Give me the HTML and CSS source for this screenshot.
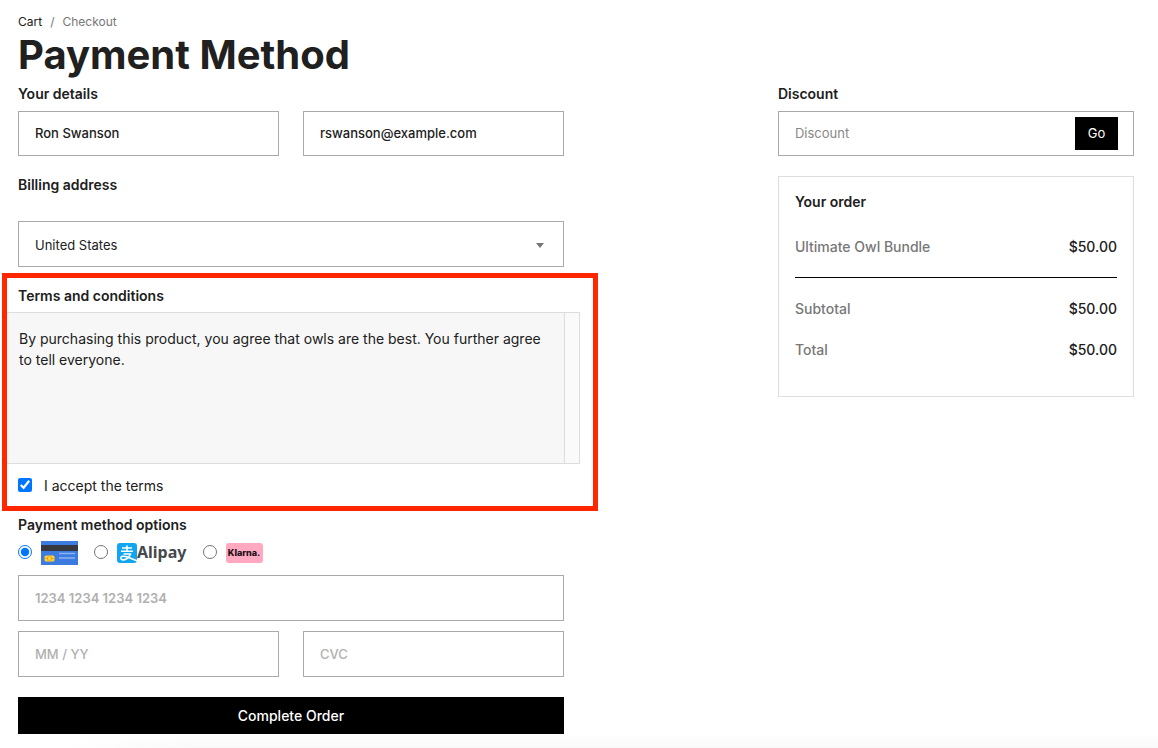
FILE: index.html
```html
<!DOCTYPE html>
<html lang="en">
<head>
    <meta charset="UTF-8">
    <meta name="viewport" content="width=device-width, initial-scale=1">
    <title>Payment Method</title>
    <link rel="stylesheet" href="styles.css">
</head>
<body>
    <header>
        <nav class="breadcrumb" aria-label="Breadcrumb">
            <a href="#">Cart</a>
            <span>/</span>
            <span>Checkout</span>
        </nav>
        <h1>Payment Method</h1>
    </header>

    <main class="checkout">
        <form class="details" id="payment">
            <h2>Your details</h2>
            <div class="row">
                <input class="field" type="text" aria-label="Name" value="Ron Swanson">
                <input class="field" type="email" aria-label="Email" value="rswanson@example.com">
            </div>

            <h2 class="billing-title"><label for="country">Billing address</label></h2>
            <div class="select">
                <select class="field" id="country">
                    <option>United States</option>
                </select>
                <svg class="arrow" width="8" height="5" viewBox="0 0 8 5" aria-hidden="true"><path d="M0 0h8L4 5z" fill="#777"/></svg>
            </div>

            <section class="terms">
                <h2>Terms and conditions</h2>
                <div class="terms-box">
                    <p>By purchasing this product, you agree that owls are the best. You further agree to tell everyone.</p>
                    <div class="terms-scroll"></div>
                </div>
                <div class="accept">
                    <input type="checkbox" id="accept" checked>
                    <label for="accept">I accept the terms</label>
                </div>
            </section>

            <h2>Payment method options</h2>
            <div class="methods">
                <input type="radio" name="method" id="card" checked>
                <label for="card" aria-label="Card">
                    <svg width="37" height="24" viewBox="0 0 37 24">
                        <rect width="37" height="24" fill="#3c7be0"/>
                        <rect y="4" width="37" height="6" fill="#35383f"/>
                        <rect x="3.500" y="14.500" width="10" height="6" rx="1.500" fill="#ffd23c"/>
                        <path d="M3.500 17.500h3M10.500 17.500h3M7.500 14.500q-2 3 0 6M9.500 14.500q2 3 0 6" fill="none" stroke="#e0a020" stroke-width="1"/>
                        <path d="M18 12.500h16M18 17h16" stroke="#8cb2f2" stroke-width="1.500"/>
                    </svg>
                </label>
                <input type="radio" name="method" id="alipay">
                <label for="alipay" aria-label="Alipay">
                    <svg width="70" height="24" viewBox="0 0 70 24">
                        <rect y="2" width="20" height="20" rx="3" fill="#12a5f0"/>
                        <path d="M5 7h10M10 4.500v5.500M4 10.200h12M6.500 13h7c-.8 2.400-2.200 4-4.200 5-2.200 1.200-5.300 1.300-5.500-.8-.2-2.300 3.300-2.400 6-1.400 3.200 1.300 6.200 2.700 10.200 4" fill="none" stroke="#fff" stroke-width="1.600"/>
                        <text x="20" y="17" class="alipay-name">Alipay</text>
                    </svg>
                </label>
                <input type="radio" name="method" id="klarna">
                <label for="klarna" aria-label="Klarna">
                    <svg width="37" height="20" viewBox="0 0 37 20">
                        <rect width="37" height="20" rx="3" fill="#ffa8c0"/>
                        <text x="18" y="13" text-anchor="middle" class="klarna-name">Klarna.</text>
                    </svg>
                </label>
            </div>

            <div class="card-fields">
                <input class="field card-number" type="text" aria-label="Card number" placeholder="1234 1234 1234 1234">
                <div class="row">
                    <input class="field" type="text" aria-label="Expiry date" placeholder="MM / YY">
                    <input class="field" type="text" aria-label="CVC" placeholder="CVC">
                </div>
            </div>

            <button class="submit" type="submit">Complete Order</button>
        </form>

        <aside>
            <h2><label for="discount">Discount</label></h2>
            <div class="discount">
                <input type="text" id="discount" placeholder="Discount">
                <button type="button">Go</button>
            </div>

            <section class="order">
                <h2>Your order</h2>
                <table>
                    <tbody class="items">
                        <tr><th scope="row">Ultimate Owl Bundle</th><td>$50.00</td></tr>
                    </tbody>
                    <tbody class="totals">
                        <tr><th scope="row">Subtotal</th><td>$50.00</td></tr>
                        <tr><th scope="row">Total</th><td>$50.00</td></tr>
                    </tbody>
                </table>
            </section>
        </aside>
    </main>
    <footer></footer>
</body>
</html>
```
FILE: styles.css
```css
* {
    box-sizing: border-box;
}

body {
    margin: 0;
    background: #fff;
    color: #202020;
    font-family: Inter, "Liberation Sans", sans-serif;
    font-size: 14px;
    line-height: 20px;
}

header {
    padding: 12px 18px 0;
}

.breadcrumb {
    display: flex;
    gap: 8px;
    font-size: 12px;
    color: #777;
}

.breadcrumb a {
    color: #202020;
    text-decoration: none;
}

h1 {
    margin: 0;
    font-size: 40px;
    line-height: 46px;
    font-weight: 700;
}

h2 {
    margin: 0;
    font-size: 14px;
    line-height: 20px;
    font-weight: 600;
}

input,
select,
button {
    font: inherit;
    color: inherit;
}

.checkout {
    display: grid;
    grid-template-columns: 23fr 15fr;
    gap: 214px;
    align-items: start;
    padding: 6px 24px 0 18px;
}

.row {
    display: grid;
    grid-template-columns: 1fr 1fr;
    gap: 24px;
}

.field {
    width: 100%;
    height: 46px;
    padding: 0 16px;
    border: 1px solid #aaa;
    border-radius: 0;
    background: #fff;
    font-size: 13px;
    appearance: none;
}

.details > .row {
    margin-top: 7px;
}

.details > .row .field {
    height: 45px;
    padding-bottom: 2px;
    font-weight: 500;
}

.billing-title {
    margin: 19px 0 26px;
}

.select {
    display: grid;
    align-items: center;
}

.select .field,
.arrow {
    grid-area: 1 / 1;
}

.select .field {
    padding-top: 2px;
}

.arrow {
    justify-self: end;
    margin: 2px 20px 0 0;
    pointer-events: none;
}

/* highlighted block, wider than the form column */
.terms {
    margin: 6px -34px 4px -16px;
    padding: 8px 13px 10px 0;
    border: 5px solid #ff2600;
}

.terms h2,
.accept {
    padding-left: 11px;
}

.terms-box {
    display: flex;
    height: 152px;
    margin-top: 6px;
    border: 1px solid #ddd;
    border-left: 0;
    background: #f7f7f7;
}

.terms-box p {
    flex: 1;
    margin: 0;
    padding: 15px 20px 0 12px;
    line-height: 21px;
}

.terms-scroll {
    width: 15px;
    border-left: 1px solid #ddd;
    background: #fafafa;
}

.accept {
    display: flex;
    align-items: center;
    gap: 12px;
    margin-top: 12px;
}

.accept input,
.methods input {
    width: 14px;
    height: 14px;
    margin: 0 0 3px;
    accent-color: #0075ff;
}

.methods {
    display: flex;
    align-items: center;
    height: 24px;
    margin-top: 6px;
}

.methods label {
    display: flex;
    margin: 0 16px 0 9px;
}

.alipay-name {
    font: 700 16px "Noto Sans", sans-serif;
    fill: #46484b;
}

.klarna-name {
    font: 800 9px Inter, sans-serif;
    fill: #201018;
}

.card-fields {
    display: grid;
    gap: 10px;
    margin-top: 10px;
}

.card-fields .field {
    font-weight: 500;
}

.card-fields .card-number {
    font-weight: 600;
}

.field::placeholder {
    color: #b0b0b0;
}

.submit {
    width: 100%;
    height: 37px;
    margin-top: 20px;
    border: 0;
    background: #000;
    color: #fff;
    font-weight: 500;
}

.discount {
    display: flex;
    align-items: center;
    height: 45px;
    margin-top: 7px;
    padding: 0 15px 0 16px;
    border: 1px solid #aaa;
}

.discount input {
    flex: 1;
    min-width: 0;
    padding: 0 0 2px;
    border: 0;
    font-size: 13px;
}

.discount input::placeholder {
    color: #888;
}

.discount button {
    width: 43px;
    height: 33px;
    padding: 0 0 2px;
    border: 0;
    background: #000;
    color: #fff;
    font-size: 13px;
}

.order {
    margin-top: 20px;
    padding: 15px 16px 25px;
    border: 1px solid #ddd;
}

.order table {
    width: 100%;
    margin-top: 15px;
    border-collapse: collapse;
}

.order th,
.order td {
    padding: 10px 0 11px;
    font-weight: 500;
}

.order th {
    color: #777;
    text-align: left;
}

.order td {
    text-align: right;
}

.items tr:last-child > * {
    padding-bottom: 20px;
}

.totals tr:first-child > * {
    padding-top: 21px;
}

.totals {
    border-top: 1px solid #000;
}

footer {
    height: 14px;
    background: linear-gradient(90deg, #fff 60px, transparent 200px), linear-gradient(#fff, #f9f9f9);
}
```
